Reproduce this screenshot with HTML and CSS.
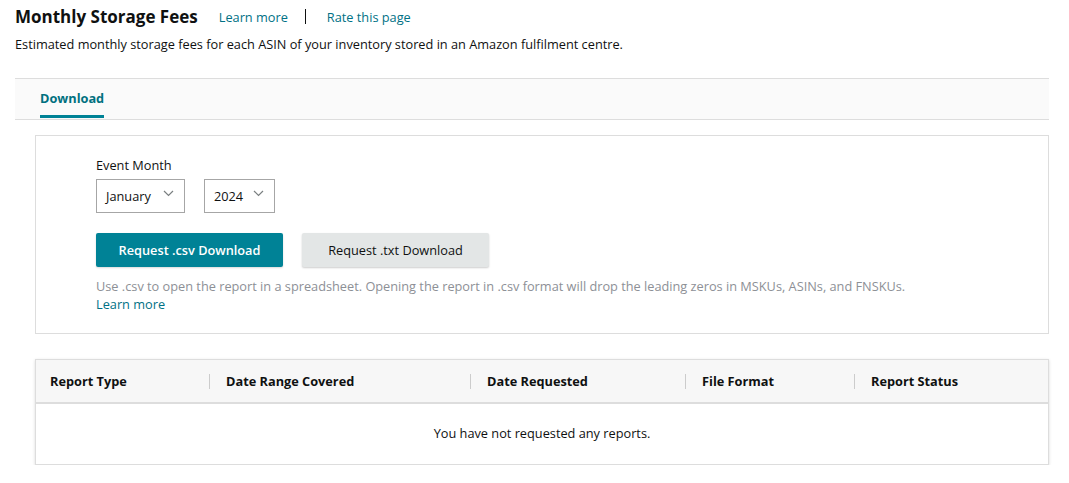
FILE: index.html
```html
<!DOCTYPE html>
<html lang="en">
<head>
    <meta charset="UTF-8">
    <meta name="viewport" content="width=device-width, initial-scale=1.0">
    <title>Monthly Storage Fees</title>
    <link rel="stylesheet" href="styles.css">
</head>
<body>
    <div class="page">
        <div class="page-header">
            <h1>Monthly Storage Fees</h1>
            <a href="#" class="link">Learn more</a>
            <span class="divider"></span>
            <a href="#" class="link">Rate this page</a>
        </div>
        <p class="subtitle">Estimated monthly storage fees for each ASIN of your inventory stored in an Amazon fulfilment centre.</p>

        <div class="tabs">
            <div class="tab active">Download</div>
        </div>

        <div class="content">
            <div class="form-box">
                <div class="label">Event Month</div>
                <div class="selects">
                    <div class="select month">
                        <span>January</span>
                        <svg class="chevron" width="11" height="7" viewBox="0 0 11 7"><path d="M1 1l4.5 4.5L10 1" fill="none" stroke="#7a7f80" stroke-width="1.2"/></svg>
                    </div>
                    <div class="select year">
                        <span>2024</span>
                        <svg class="chevron" width="11" height="7" viewBox="0 0 11 7"><path d="M1 1l4.5 4.5L10 1" fill="none" stroke="#7a7f80" stroke-width="1.2"/></svg>
                    </div>
                </div>
                <div class="buttons">
                    <button class="btn primary">Request .csv Download</button>
                    <button class="btn secondary">Request .txt Download</button>
                </div>
                <p class="hint">Use .csv to open the report in a spreadsheet. Opening the report in .csv format will drop the leading zeros in MSKUs, ASINs, and FNSKUs.</p>
                <a href="#" class="link hint-link">Learn more</a>
            </div>

            <div class="table">
                <div class="table-head">
                    <div class="th col1">Report Type</div>
                    <div class="th col2">Date Range Covered</div>
                    <div class="th col3">Date Requested</div>
                    <div class="th col4">File Format</div>
                    <div class="th col5">Report Status</div>
                </div>
                <div class="table-empty">You have not requested any reports.</div>
            </div>
        </div>
    </div>
</body>
</html>
```

FILE: styles.css
```css
* {
    margin: 0;
    padding: 0;
    box-sizing: border-box;
}

body {
    font-family: "Open Sans", "Noto Sans", Arial, sans-serif;
    font-size: 12.75px;
    color: #0f1111;
    background: #fff;
}

.page {
    padding: 4px 20px 0 15px;
}

.page-header {
    display: flex;
    align-items: center;
    height: 25px;
}

h1 {
    font-size: 17px;
    font-weight: 700;
    color: #0f1111;
    margin-right: 21px;
}

.link {
    color: #007185;
    text-decoration: none;
    font-size: 12.75px;
}

.divider {
    width: 1px;
    height: 15px;
    background: #0f1111;
    margin: 0 21px 0 17px;
}

.subtitle {
    margin-top: 5px;
    line-height: 20px;
}

/* Tabs */
.tabs {
    margin-top: 24px;
    height: 42px;
    background: #fafafa;
    border-top: 1px solid #ddd;
    border-bottom: 1px solid #ddd;
    padding-left: 25px;
    display: flex;
}

.tab {
    font-weight: 700;
    color: #00707f;
    display: flex;
    align-items: center;
    border-bottom: 3px solid #008296;
    margin-bottom: 1px;
    padding-top: 1px;
}

.content {
    padding-left: 20px;
}

/* Form */
.form-box {
    margin-top: 15px;
    border: 1px solid #ddd;
    padding: 20px 60px 21px 60px;
    height: 199px;
}

.label {
    line-height: 18px;
}

.selects {
    display: flex;
    gap: 19px;
    margin-top: 5px;
}

.select {
    height: 34px;
    border: 1px solid #a6a6a6;
    display: flex;
    align-items: center;
    justify-content: space-between;
    padding: 0 10px 0 9px;
}

.month {
    width: 89px;
}

.year {
    width: 71px;
}

.chevron {
    margin-top: -5px;
}

.buttons {
    display: flex;
    gap: 19px;
    margin-top: 20px;
}

.btn {
    height: 34px;
    border: none;
    border-radius: 2px;
    font-family: inherit;
    font-size: 12.75px;
    width: 187px;
}

.primary {
    background: #008296;
    color: #fff;
    font-weight: 600;
    box-shadow: 0 1px 2px rgba(0,0,0,0.15);
}

.secondary {
    background: #e3e6e6;
    color: #0f1111;
    box-shadow: 0 1px 2px rgba(0,0,0,0.2);
}

.hint {
    margin-top: 10px;
    color: #8d9096;
    line-height: 18px;
}

.hint-link {
    display: block;
    line-height: 18px;
}

/* Table */
.table {
    margin-top: 25px;
    border: 1px solid #ddd;
    box-shadow: 0 1px 3px rgba(0,0,0,0.15);
}

.table-head {
    display: flex;
    height: 44px;
    background: #f7f7f7;
    border-bottom: 2px solid #ddd;
}

.th {
    display: flex;
    align-items: center;
    font-weight: 700;
    position: relative;
    padding-left: 17px;
}

.th + .th::before {
    content: "";
    position: absolute;
    left: 0;
    top: 14px;
    height: 15px;
    width: 1px;
    background: #ccc;
}

.col1 { width: 173px; padding-left: 14px; }
.col2 { width: 261px; }
.col3 { width: 215px; }
.col4 { width: 169px; }
.col5 { flex: 1; }

.table-empty {
    height: 60px;
    display: flex;
    align-items: center;
    justify-content: center;
    padding-bottom: 2px;
}
```
